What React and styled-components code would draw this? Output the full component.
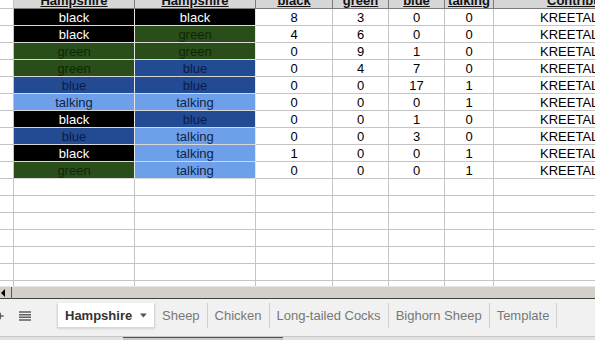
import React from 'react';
import styled, { createGlobalStyle } from 'styled-components';

const GlobalStyle = createGlobalStyle`
    html, body {
        margin: 0;
        padding: 0;
        background: #ffffff;
        overflow: hidden;
        font-family: "Liberation Sans", Arial, sans-serif;
    }
    * { box-sizing: border-box; }
`;

const swatches = {
    black:   { bg: '#000000', fg: '#ffffff' },
    green:   { bg: '#2a4e19', fg: '#0f2708' },
    blue:    { bg: '#224b93', fg: '#0b1c48' },
    talking: { bg: '#6ea0ea', fg: '#102448' },
};

const rows = [
    ['black', 'black', 8, 3, 0, 0],
    ['black', 'green', 4, 6, 0, 0],
    ['green', 'green', 0, 9, 1, 0],
    ['green', 'blue', 0, 4, 7, 0],
    ['blue', 'blue', 0, 0, 17, 1],
    ['talking', 'talking', 0, 0, 0, 1],
    ['black', 'blue', 0, 0, 1, 0],
    ['blue', 'talking', 0, 0, 3, 0],
    ['black', 'talking', 1, 0, 0, 1],
    ['green', 'talking', 0, 0, 0, 1],
];

const headers = ['Hampshire', 'Hampshire', 'black', 'green', 'blue', 'talking'];
const tabs = ['Sheep', 'Chicken', 'Long-tailed Cocks', 'Bighorn Sheep', 'Template'];

const App = () => {
    return (
        <Page>
            <GlobalStyle />
            <GridViewport>
                <Grid>
                    <Cell />
                    {headers.map((h, i) => <HeadCell key={i}><u>{h}</u></HeadCell>)}
                    <HeadCell $pad="53px" $left><u>Contributor</u></HeadCell>

                    {rows.map((r, idx) => (
                        <React.Fragment key={idx}>
                            <Cell />
                            <ColorCell $tone={r[0]}>{r[0]}</ColorCell>
                            <ColorCell $tone={r[1]}>{r[1]}</ColorCell>
                            <Cell>{r[2]}</Cell>
                            <Cell>{r[3]}</Cell>
                            <Cell>{r[4]}</Cell>
                            <Cell>{r[5]}</Cell>
                            <Cell $pad="46px" $left>KREETALIA</Cell>
                        </React.Fragment>
                    ))}

                    {Array.from({ length: 7 }).map((_, idx) => (
                        <React.Fragment key={'e' + idx}>
                            {Array.from({ length: 8 }).map((__, c) => <Cell key={c} />)}
                        </React.Fragment>
                    ))}
                </Grid>
            </GridViewport>

            <ScrollStrip>
                <ArrowLeft />
                <StripDivider />
            </ScrollStrip>

            <TabBar>
                <BarIcon $w="8px">
                    <svg width="12" height="12" viewBox="0 0 12 12">
                        <path d="M0 6h10M5 1v10" stroke="#5f5f5f" strokeWidth="2" />
                    </svg>
                </BarIcon>
                <BarIcon $w="16px">
                    <svg width="12" height="10" viewBox="0 0 12 10">
                        <path d="M0 1h12M0 3.7h12M0 6.3h12M0 9h12" stroke="#5f5f5f" strokeWidth="1.4" />
                    </svg>
                </BarIcon>
                <TabList>
                    <ActiveTab>
                        Hampshire
                        <svg width="8" height="5" viewBox="0 0 8 5">
                            <path d="M0 0h8L4 5z" fill="#555" />
                        </svg>
                    </ActiveTab>
                    {tabs.map(t => <Tab key={t}>{t}</Tab>)}
                </TabList>
            </TabBar>

            <BottomStrip>
                <Thumb />
            </BottomStrip>
        </Page>
    );
};

export default App;

const Page = styled.div`
    width: 595px;
    height: 340px;
    overflow: hidden;
    display: flex;
    flex-direction: column;
    background: #ffffff;
`
const GridViewport = styled.div`
    height: 286px;
    overflow: hidden;
    flex-shrink: 0;
`
const Grid = styled.div`
    display: grid;
    grid-template-columns: 14px 121px 121px 77px 56px 56px 49px 200px;
    grid-auto-rows: 17px;
    margin-top: -8px;
    width: 694px;
`
const Cell = styled.div`
    border-right: 1px solid #c4c4c4;
    border-bottom: 1px solid #c4c4c4;
    font-size: 13px;
    line-height: 17px;
    color: #000000;
    text-align: ${props => props.$left ? 'left' : 'center'};
    padding-left: ${props => props.$pad || '0'};
    white-space: nowrap;
    overflow: hidden;
`
const HeadCell = styled(Cell)`
    background: #d6d6d6;
    font-weight: 700;
    border-right-color: #7a7a7a;
    border-bottom-color: #7a7a7a;
    color: #111111;
`
const ColorCell = styled(Cell)`
    background: ${props => swatches[props.$tone].bg};
    color: ${props => swatches[props.$tone].fg};
    border-right-color: #e6e6e6;
    border-bottom-color: #d8d8d8;
`
const ScrollStrip = styled.div`
    height: 13px;
    background: #d4d0c8;
    border-top: 1px solid #e8e6e0;
    border-bottom: 1px solid #404040;
    display: flex;
    align-items: center;
    flex-shrink: 0;
`
const ArrowLeft = styled.div`
    width: 0;
    height: 0;
    margin-left: 1px;
    border-top: 4px solid transparent;
    border-bottom: 4px solid transparent;
    border-right: 4px solid #000000;
`
const StripDivider = styled.div`
    width: 1px;
    height: 12px;
    margin-left: 6px;
    background: #5a5a5a;
`
const TabBar = styled.div`
    height: 37px;
    background: #f1f1f1;
    display: flex;
    align-items: flex-start;
    padding-top: 4px;
    flex-shrink: 0;
    margin-left: -3px;
`
const BarIcon = styled.div`
    width: ${props => props.$w};
    height: 25px;
    display: flex;
    align-items: center;
    margin-right: 14px;
    svg { display: block; }
`
const TabList = styled.div`
    display: flex;
    align-items: stretch;
    height: 25px;
    margin-left: 8px;
`
const Tab = styled.div`
    display: flex;
    align-items: center;
    padding: 0 7px;
    font-size: 13px;
    color: #777777;
    border-right: 1px solid #d0d0d0;
    white-space: nowrap;
`
const ActiveTab = styled.div`
    display: flex;
    align-items: center;
    gap: 8px;
    width: 98px;
    padding: 0 7px;
    background: #ffffff;
    border: 1px solid #d6d6d6;
    border-top-color: #ffffff;
    box-shadow: 0 1px 2px rgba(0, 0, 0, 0.12);
    font-size: 13px;
    font-weight: 700;
    color: #333333;
    white-space: nowrap;
`
const BottomStrip = styled.div`
    flex: 1;
    background: #e2e2e2;
    border-top: 1px solid #c8c8c8;
    display: flex;
`
const Thumb = styled.div`
    margin-left: 123px;
    width: 160px;
    border-top: 1px solid #555555;
    background: #c8c8c8;
`
